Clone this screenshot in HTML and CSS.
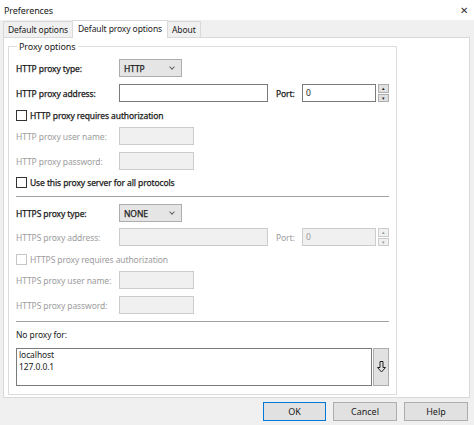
FILE: index.html
```html
<!DOCTYPE html>
<html lang="en">
<head>
	<meta charset="UTF-8">
	<title>Preferences</title>
	<link rel="stylesheet" href="styles.css">
</head>
<body>
	<div class="dialog">
		<div class="titlebar">
			<span class="title">Preferences</span>
			<span class="close">&#x2715;</span>
		</div>

		<div class="tabs">
			<span class="tab">Default options</span>
			<span class="tab active">Default proxy options</span>
			<span class="tab">About</span>
		</div>

		<div class="page">
			<fieldset class="group">
				<legend>Proxy options</legend>

				<div class="row r-type">
					<label class="lbl strong">HTTP proxy type:</label>
					<div class="select"><span>HTTP</span><i class="chev"></i></div>
				</div>
				<div class="row r-addr">
					<label class="lbl strong">HTTP proxy address:</label>
					<div class="input wide"></div>
					<label class="port strong">Port:</label>
					<div class="input port-box">0</div>
					<div class="spin"><b>&#9652;</b><b>&#9662;</b></div>
				</div>
				<div class="check r-chk1">
					<span class="box"></span><span class="strong">HTTP proxy requires authorization</span>
				</div>
				<div class="row r-user">
					<label class="lbl off">HTTP proxy user name:</label>
					<div class="input short off"></div>
				</div>
				<div class="row r-pass">
					<label class="lbl off">HTTP proxy password:</label>
					<div class="input short off"></div>
				</div>
				<div class="check r-chk2">
					<span class="box"></span><span class="strong">Use this proxy server for all protocols</span>
				</div>

				<hr class="sep s1">

				<div class="row r-type2">
					<label class="lbl strong">HTTPS proxy type:</label>
					<div class="select"><span>NONE</span><i class="chev"></i></div>
				</div>
				<div class="row r-addr2">
					<label class="lbl off">HTTPS proxy address:</label>
					<div class="input wide off"></div>
					<label class="port off">Port:</label>
					<div class="input port-box off">0</div>
					<div class="spin off"><b>&#9652;</b><b>&#9662;</b></div>
				</div>
				<div class="check r-chk3 off">
					<span class="box"></span><span>HTTPS proxy requires authorization</span>
				</div>
				<div class="row r-user2">
					<label class="lbl off">HTTPS proxy user name:</label>
					<div class="input short off"></div>
				</div>
				<div class="row r-pass2">
					<label class="lbl off">HTTPS proxy password:</label>
					<div class="input short off"></div>
				</div>

				<hr class="sep s2">

				<div class="noproxy-lbl">No proxy for:</div>
				<div class="noproxy">
					<div class="list">localhost<br>127.0.0.1</div>
					<div class="list-btn">
						<svg width="9" height="12" viewBox="0 0 9 12"><path d="M3 0.5h3v6h2.5L4.5 11 0.5 6.5H3z" fill="none" stroke="#222" stroke-width="1"/></svg>
					</div>
				</div>
			</fieldset>
		</div>

		<div class="footer">
			<button class="btn default">OK</button>
			<button class="btn">Cancel</button>
			<button class="btn">Help</button>
		</div>
	</div>
</body>
</html>
```

FILE: styles.css
```css
*{
	padding: 0;
	margin: 0;
	box-sizing: border-box;
}

body{
	font-family: "Noto Sans", "Open Sans", sans-serif;
	font-size: 8.5px;
	letter-spacing: -0.1px;
	color: #1b1b1b;
	background: #f0f0f0;
}

.dialog{
	width: 474px;
	height: 425px;
	background: #f0f0f0;
	display: flex;
	flex-direction: column;
}

.titlebar{
	height: 20px;
	background: #fff;
	display: flex;
	align-items: center;
	justify-content: space-between;
	padding: 0 6px 0 4px;
	font-size: 9px;
}
.close{
	font-size: 10px;
	color: #333;
}

.tabs{
	height: 17px;
	display: flex;
	align-items: flex-end;
	padding-left: 3px;
}
.tab{
	height: 16px;
	line-height: 15px;
	padding: 0 4px;
	border: 1px solid #d9d9d9;
	border-bottom: 0;
	background: #f0f0f0;
	font-size: 8.5px;
}
.tab + .tab{
	margin-left: -1px;
}
.tab.active{
	height: 18px;
	background: #fff;
	position: relative;
	z-index: 1;
	margin-bottom: -1px;
	padding: 0 5px;
}

.page{
	height: 361px;
	margin: 0 4px 0 3px;
	background: #fff;
	border: 1px solid #d9d9d9;
	padding: 2px 73px 0 4px;
}

.group{
	border: 1px solid #dcdcdc;
	padding: 2px 7px 5px 7px;
	height: 355px;
}
.group legend{
	padding: 0 2px;
	margin-left: 1px;
	font-size: 9px;
}

.row{
	display: flex;
	align-items: center;
	height: 18px;
	white-space: nowrap;
}
.lbl{
	width: 103px;
	flex: none;
}
.strong{
	-webkit-text-stroke: 0.25px #1b1b1b;
}
.off{
	color: #9c9c9c;
}

.r-type{ margin-top: 4px; }
.r-addr{ margin-top: 7px; }
.r-chk1{ margin-top: 6px; }
.r-user{ margin-top: 5px; }
.r-pass{ margin-top: 7px; }
.r-chk2{ margin-top: 5px; }
.r-type2{ margin-top: 7px; }
.r-addr2{ margin-top: 6px; }
.r-chk3{ margin-top: 6px; }
.r-user2{ margin-top: 5px; }
.r-pass2{ margin-top: 7px; }

.select{
	width: 63px;
	height: 18px;
	background: #e5e5e5;
	border: 1px solid #adadad;
	display: flex;
	align-items: center;
	justify-content: space-between;
	padding: 0 7px 0 4px;
	-webkit-text-stroke: 0.25px #1b1b1b;
}
.chev{
	width: 4px;
	height: 4px;
	border-right: 1px solid #666;
	border-bottom: 1px solid #666;
	transform: rotate(45deg);
	margin-top: -3px;
}

.input{
	height: 18px;
	background: #fff;
	border: 1px solid #7a7a7a;
	padding: 0 3px;
	line-height: 16px;
}
.input.off{
	background: #f0f0f0;
	border-color: #cccccc;
}
.wide{ width: 149px; }
.short{ width: 75px; }
.port{
	margin-left: 8px;
	width: 26px;
}
.port-box{ width: 74px; }

.spin{
	margin-left: 2px;
	width: 11px;
	height: 18px;
	display: flex;
	flex-direction: column;
	gap: 1px;
}
.spin b{
	flex: 1;
	background: #e1e1e1;
	border: 1px solid #adadad;
	font-size: 5px;
	line-height: 6px;
	text-align: center;
	font-weight: normal;
	color: #222;
}
.spin.off b{
	background: #f0f0f0;
	border-color: #cccccc;
	color: #999;
}

.check{
	display: flex;
	align-items: center;
	height: 14px;
	white-space: nowrap;
}
.box{
	width: 11px;
	height: 11px;
	border: 1px solid #333;
	background: #fff;
	margin-right: 3px;
	flex: none;
}
.check.off .box{
	border-color: #c6c6c6;
}

.sep{
	border: 0;
	border-top: 1px solid #a0a0a0;
}
.s1{ margin-top: 7px; }
.s2{ margin-top: 7px; }

.noproxy-lbl{
	margin-top: 6px;
	height: 14px;
	line-height: 14px;
}
.noproxy{
	margin-top: 6px;
	display: flex;
	height: 38px;
}
.list{
	width: 356px;
	border: 1px solid #7a7a7a;
	padding: 0 2px;
	line-height: 12px;
}
.list-btn{
	width: 16px;
	margin-left: 1px;
	background: #e1e1e1;
	border: 1px solid #adadad;
	display: flex;
	align-items: center;
	justify-content: center;
}

.footer{
	flex: 1;
	display: flex;
	justify-content: flex-end;
	align-items: center;
	gap: 7px;
	padding-right: 6px;
}
.btn{
	width: 64px;
	height: 19px;
	background: #e1e1e1;
	border: 1px solid #adadad;
	font-family: inherit;
	font-size: 9px;
	color: #1b1b1b;
}
.btn.default{
	border-color: #0078d7;
	width: 63px;
}
```
